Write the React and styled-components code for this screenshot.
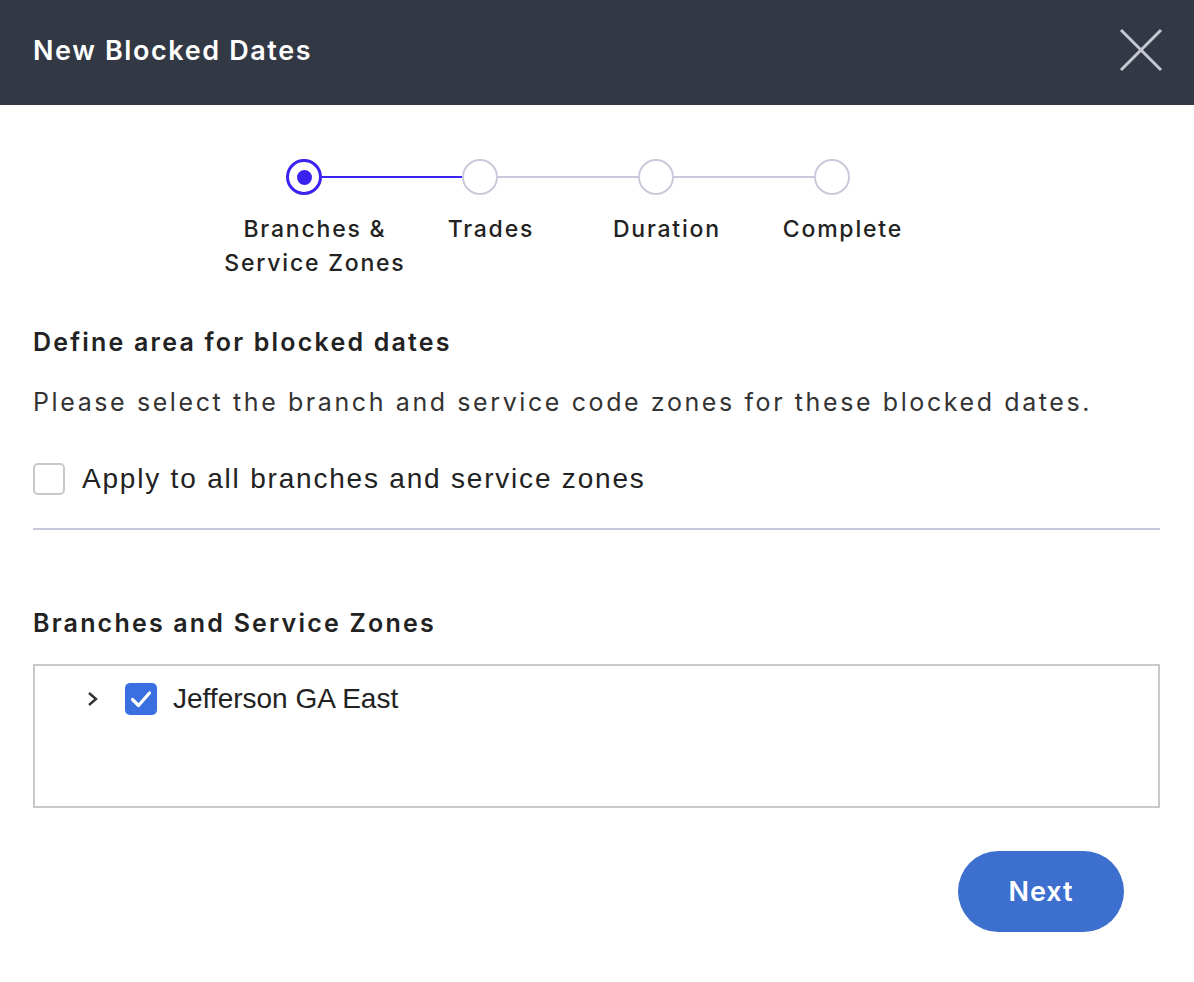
import React from "react";
import styled, { createGlobalStyle } from "styled-components";

const Global = createGlobalStyle`
  html, body { margin: 0; padding: 0; background: #ffffff; }
  body { font-family: Inter, "Open Sans", sans-serif; -webkit-font-smoothing: antialiased; }
  * { box-sizing: border-box; }
`;

const Modal = styled.div`
  width: 1194px;
  min-height: 982px;
  background: #fff;
  display: flex;
  flex-direction: column;
`;

const Header = styled.header`
  height: 105px;
  background: #323844;
  display: flex;
  align-items: center;
  justify-content: space-between;
  padding: 0 31px 0 33px;
`;

const Title = styled.h1`
  margin: 0;
  color: #ffffff;
  font-family: Inter, sans-serif;
  font-size: 27px;
  font-weight: 600;
  letter-spacing: 1.6px;
  padding-bottom: 4px;
`;

const CloseButton = styled.button`
  width: 44px;
  height: 44px;
  border: 0;
  padding: 0;
  background: transparent;
  display: flex;
  align-items: center;
  justify-content: center;
  cursor: pointer;
  margin-bottom: 6px;
`;

const Body = styled.div`
  padding: 54px 34px 0 33px;
  display: flex;
  flex-direction: column;
`;

const Stepper = styled.ol`
  list-style: none;
  margin: 0 0 0 193px;
  padding: 0;
  display: flex;
`;

const Step = styled.li`
  width: 176px;
  position: relative;
  display: flex;
  flex-direction: column;
  align-items: center;
  &::before {
    content: "";
    display: ${(p) => (p.$first ? "none" : "block")};
    position: absolute;
    top: 17px;
    left: -80px;
    width: 140px;
    height: 2px;
    background: ${(p) => (p.$lineActive ? "#3b22f0" : "#c9cbdc")};
  }
`;

const Circle = styled.span`
  width: 36px;
  height: 36px;
  border-radius: 50%;
  margin-right: 20px;
  border: ${(p) => (p.$active ? "3px solid #3b22f0" : "2px solid #c9cbdc")};
  background: #fff;
  display: flex;
  align-items: center;
  justify-content: center;
  &::after {
    content: "";
    display: ${(p) => (p.$active ? "block" : "none")};
    width: 15px;
    height: 15px;
    border-radius: 50%;
    background: #3b22f0;
  }
`;

const StepLabel = styled.span`
  margin-top: 17px;
  margin-right: -1.8px;
  font-size: 23px;
  line-height: 34px;
  font-weight: 500;
  letter-spacing: 1.8px;
  color: #222;
  text-align: center;
  white-space: nowrap;
`;

const SectionTitle = styled.h2`
  margin: ${(p) => p.$mt || "0"} 0 0;
  font-size: 25px;
  line-height: 30px;
  font-weight: 600;
  letter-spacing: 2.2px;
  color: #222;
`;

const Description = styled.p`
  margin: 30px 0 0;
  font-size: 25px;
  line-height: 30px;
  font-weight: 400;
  color: #333;
  letter-spacing: 2.6px;
`;

const CheckRow = styled.label`
  display: flex;
  align-items: center;
  margin-top: 46px;
  gap: 17px;
  font-family: "Liberation Sans", Arial, sans-serif;
  font-size: 28px;
  letter-spacing: 1.8px;
  color: #222;
`;

const Box = styled.span`
  width: 32px;
  height: 32px;
  flex: none;
  border-radius: 5px;
  border: ${(p) => (p.$checked ? "none" : "2px solid #c8c8c8")};
  background: ${(p) => (p.$checked ? "#3a6fe0" : "#fff")};
  display: flex;
  align-items: center;
  justify-content: center;
`;

const Divider = styled.hr`
  margin: 33px 0 0;
  border: 0;
  height: 2px;
  background: #c6c9da;
`;

const TreeBox = styled.div`
  margin-top: 26px;
  height: 144px;
  border: 2px solid #c8c9cc;
  padding: 17px 0 0 50px;
`;

const TreeRow = styled.div`
  display: flex;
  align-items: center;
  height: 32px;
  font-family: "Liberation Sans", Arial, sans-serif;
  font-size: 28px;
  color: #222;
`;

const Chevron = styled.span`
  width: 40px;
  display: flex;
  align-items: center;
  color: #333;
`;

const TreeLabel = styled.span`
  margin-left: 16px;
`;

const Footer = styled.div`
  display: flex;
  justify-content: flex-end;
  margin-top: 43px;
  padding-right: 36px;
`;

const NextButton = styled.button`
  width: 166px;
  height: 81px;
  border: 0;
  border-radius: 41px;
  background: #3d6fcf;
  color: #fff;
  font-family: Inter, sans-serif;
  font-size: 27px;
  font-weight: 600;
  letter-spacing: 1px;
  cursor: pointer;
`;

const Check = () => (
  <svg width="32" height="32" viewBox="0 0 32 32" fill="none">
    <path d="M7.5 16.5 L13.5 22.5 L24.5 10" stroke="#fff" strokeWidth="3.2" strokeLinecap="round" strokeLinejoin="round" />
  </svg>
);

const steps = [
  { label: ["Branches &", "Service Zones"], active: true },
  { label: ["Trades"], lineActive: true },
  { label: ["Duration"] },
  { label: ["Complete"] },
];

export default function App() {
  return (
    <>
      <Global />
      <Modal>
        <Header>
          <Title>New Blocked Dates</Title>
          <CloseButton aria-label="Close">
            <svg width="44" height="44" viewBox="0 0 44 44">
              <path d="M2 2 L42 42 M42 2 L2 42" stroke="#c5c8d2" strokeWidth="3" />
            </svg>
          </CloseButton>
        </Header>
        <Body>
          <Stepper>
            {steps.map((s, i) => (
              <Step key={i} $first={i === 0} $lineActive={s.lineActive}>
                <Circle $active={s.active} />
                <StepLabel>
                  {s.label.map((l, j) => (
                    <React.Fragment key={j}>
                      {j > 0 && <br />}
                      {l}
                    </React.Fragment>
                  ))}
                </StepLabel>
              </Step>
            ))}
          </Stepper>
          <SectionTitle $mt="47px">Define area for blocked dates</SectionTitle>
          <Description>Please select the branch and service code zones for these blocked dates.</Description>
          <CheckRow>
            <Box />
            Apply to all branches and service zones
          </CheckRow>
          <Divider />
          <SectionTitle $mt="78px">Branches and Service Zones</SectionTitle>
          <TreeBox>
            <TreeRow>
              <Chevron>
                <svg width="16" height="20" viewBox="0 0 16 20">
                  <path d="M4 4 L11 10 L4 16" stroke="#333" strokeWidth="2.4" fill="none" />
                </svg>
              </Chevron>
              <Box $checked>
                <Check />
              </Box>
              <TreeLabel>Jefferson GA East</TreeLabel>
            </TreeRow>
          </TreeBox>
          <Footer>
            <NextButton>Next</NextButton>
          </Footer>
        </Body>
      </Modal>
    </>
  );
}
